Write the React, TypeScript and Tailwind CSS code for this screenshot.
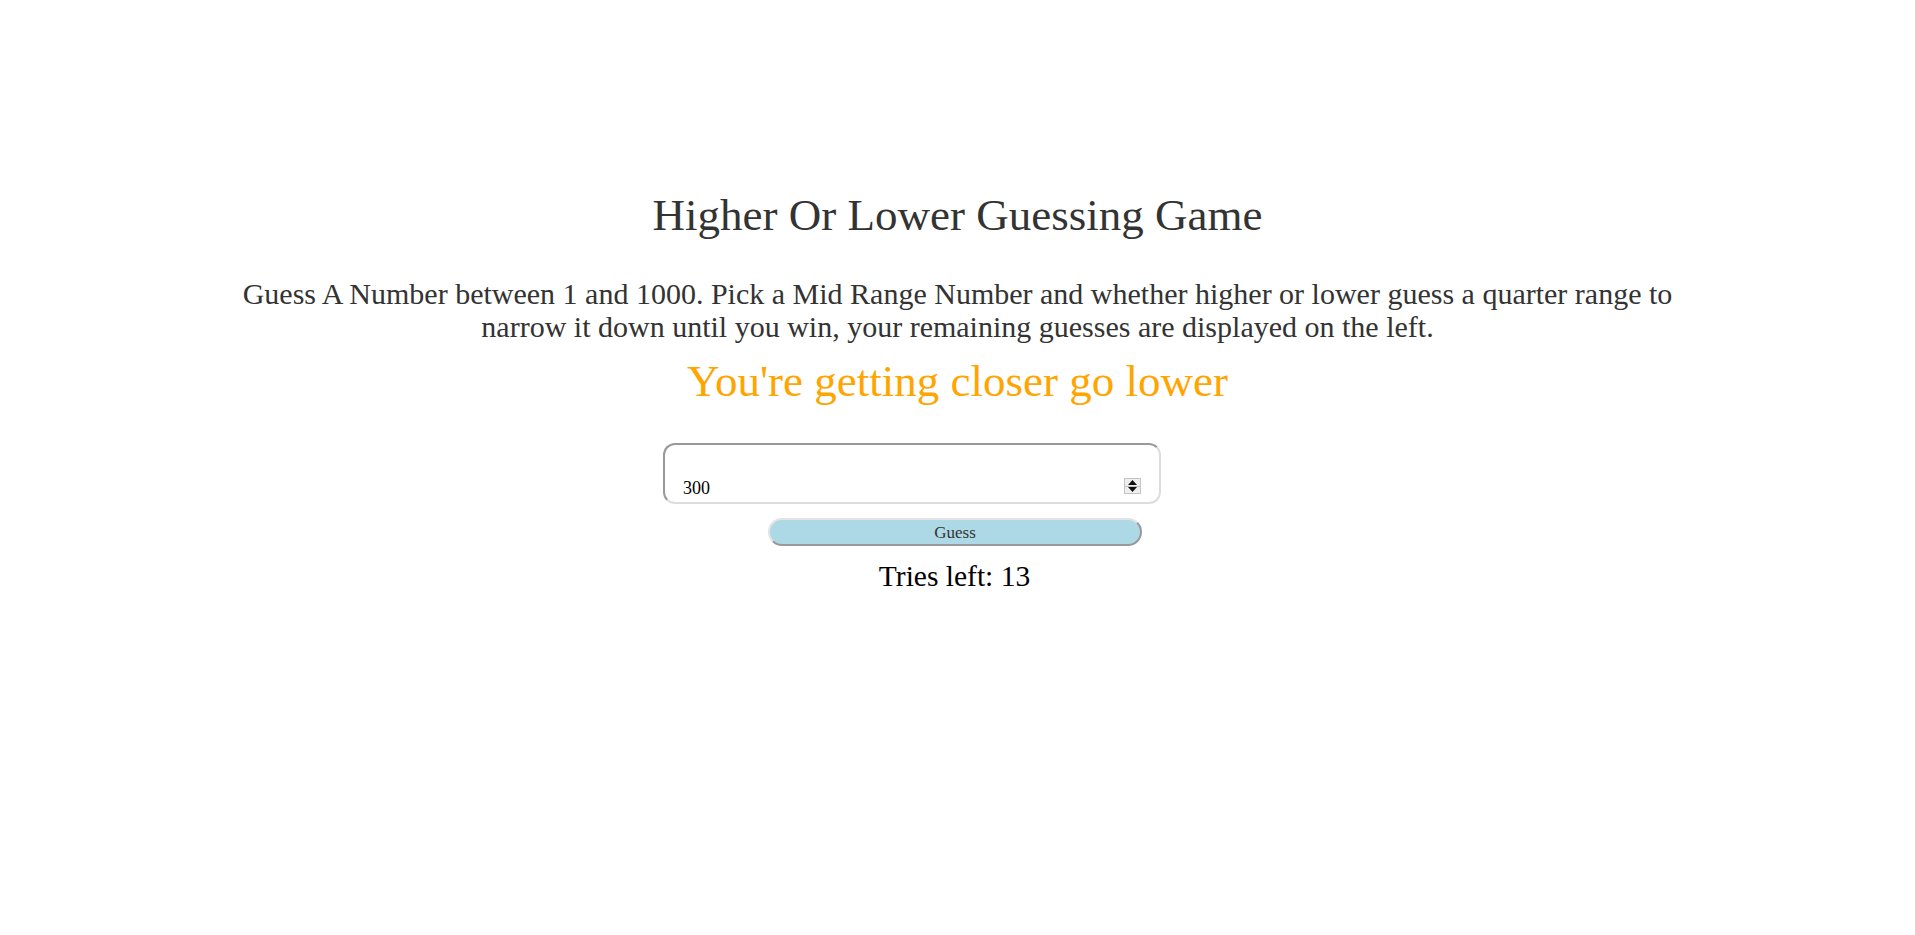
import { useState } from 'react'

function Spinner() {
  return (
    <div className="absolute right-[20px] top-[35px] w-[17px] h-[16px] flex flex-col border border-[#c4c4c4] bg-[#efefef]">
      <div className="flex-1 flex items-center justify-center border-b border-[#c4c4c4]">
        <svg width="9" height="5" viewBox="0 0 9 5">
          <path d="M0 5 L4.5 0 L9 5 Z" fill="#111" />
        </svg>
      </div>
      <div className="flex-1 flex items-center justify-center">
        <svg width="9" height="5" viewBox="0 0 9 5">
          <path d="M0 0 L4.5 5 L9 0 Z" fill="#111" />
        </svg>
      </div>
    </div>
  )
}

export default function App() {
  const [guess, setGuess] = useState('300')
  const [tries] = useState(13)

  return (
    <div className="min-h-screen bg-white flex flex-col items-center font-['Liberation_Serif','Times_New_Roman',serif]">
      <h1 className="mt-[189px] text-[45px] leading-[53px] text-[#333]">Higher Or Lower Guessing Game</h1>

      <p className="mt-[35px] max-w-[1480px] text-center text-[30px] leading-[33px] text-[#333]">
        Guess A Number between 1 and 1000. Pick a Mid Range Number and whether higher or lower guess a quarter range
        to narrow it down until you win, your remaining guesses are displayed on the left.
      </p>

      <h2 className="mt-[12px] text-[45px] leading-[53px] text-[#ffa500]">You're getting closer go lower</h2>

      {/* Guess input */}
      <div className="relative mt-[35px] mr-[91px]">
        <input
          type="number"
          value={guess}
          onChange={(e) => setGuess(e.target.value)}
          className="block w-[498px] h-[61px] pt-[31px] pb-[1px] pl-[18px] pr-[40px] rounded-[12px] border-2 border-t-[#999] border-l-[#999] border-b-[#ddd] border-r-[#ddd] bg-white text-[18px] text-black outline-none font-['Liberation_Serif',serif] [appearance:textfield] [&::-webkit-inner-spin-button]:appearance-none [&::-webkit-outer-spin-button]:appearance-none"
        />
        <Spinner />
      </div>

      <button className="mt-[14px] mr-[5px] w-[374px] h-[28px] rounded-[14px] border-2 border-t-[#e3e3e3] border-l-[#e3e3e3] border-b-[#999] border-r-[#999] bg-[#add8e6] text-[17px] leading-none text-[#333] font-['Liberation_Serif',serif]">
        Guess
      </button>

      <div className="mt-[14px] mr-[6px] text-[29.5px] leading-[33px] text-black">Tries left: {tries}</div>
    </div>
  )
}
